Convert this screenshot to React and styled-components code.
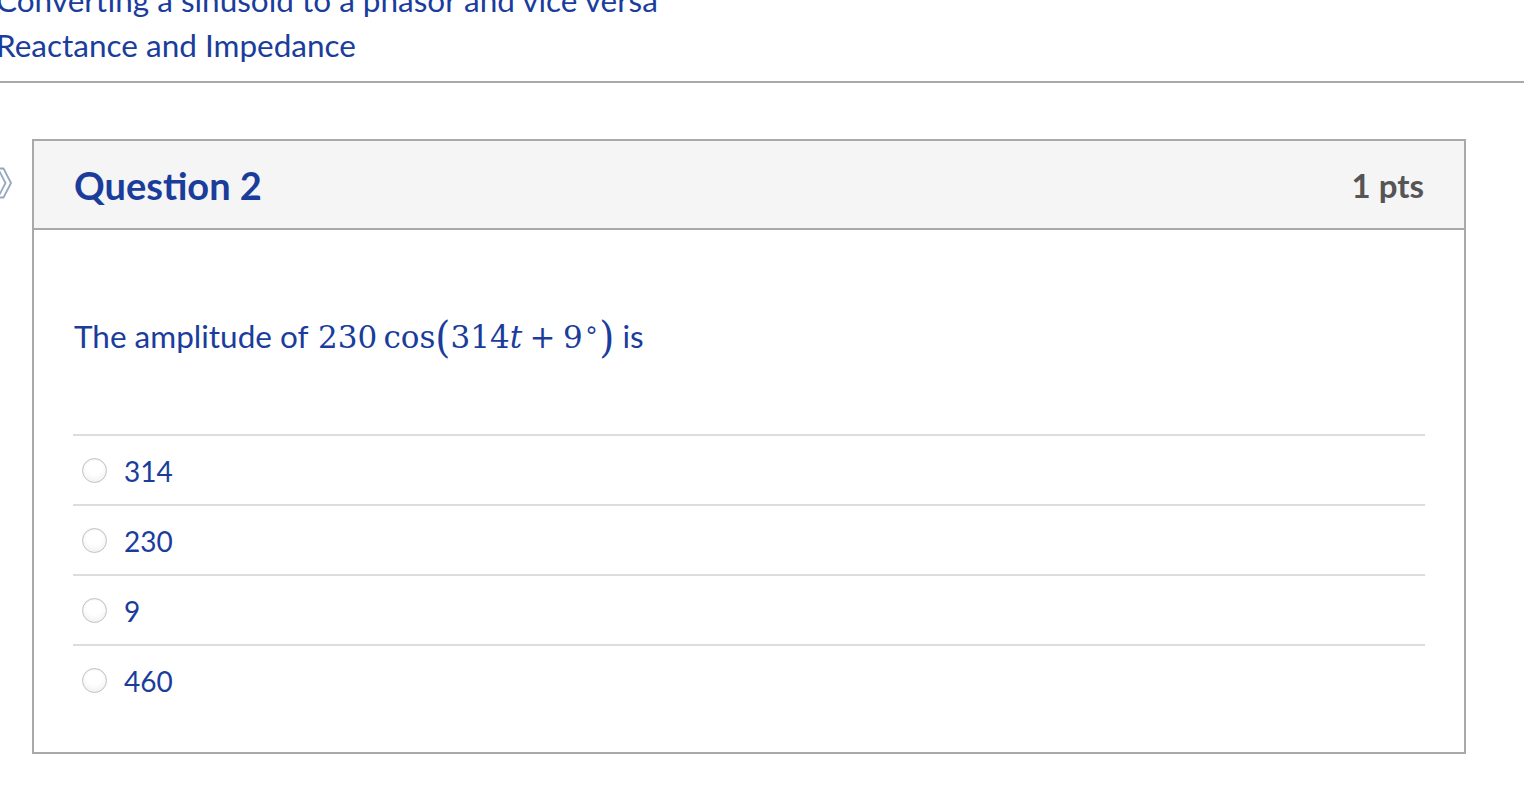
import React from "react";
import styled, { createGlobalStyle } from "styled-components";

const GlobalStyle = createGlobalStyle`
  html, body {
    margin: 0;
    padding: 0;
    background: #ffffff;
    overflow: hidden;
  }
  body {
    font-family: Lato, "Noto Sans", sans-serif;
    color: #1a3d9c;
  }
`;

const Page = styled.div`
  width: 1524px;
  height: 789px;
  overflow: hidden;
`;

const ModuleLinks = styled.ul`
  list-style: none;
  margin: -22px 0 0 -4px;
  padding: 0;
`;

const ModuleLink = styled.li`
  font-size: 31.5px;
  line-height: 45px;
  color: #1a3d9c;
  white-space: nowrap;
`;

const Rule = styled.hr`
  border: none;
  border-top: 2px solid #a9a9a9;
  margin: 13px 0 0;
`;

const QuestionWrap = styled.div`
  position: relative;
  margin: 56px 58px 0 32px;
`;

const Chevron = styled.svg`
  position: absolute;
  left: -35px;
  top: 28px;
`;

const QuestionBox = styled.div`
  border: 2px solid #a9a9a9;
  background: #ffffff;
`;

const QuestionHeader = styled.div`
  display: flex;
  align-items: center;
  justify-content: space-between;
  height: 87px;
  padding: 0 40px 0 40px;
  background: #f5f5f5;
  border-bottom: 2px solid #a9a9a9;
`;

const QuestionTitle = styled.h2`
  margin: 0;
  font-size: 38px;
  font-weight: 700;
  color: #1a3d9c;
`;

const Points = styled.span`
  font-size: 33px;
  font-weight: 700;
  color: #555555;
`;

const QuestionBody = styled.div`
  padding: 0 39px 38px;
`;

const QuestionText = styled.p`
  margin: 0;
  padding: 84px 0 75px 1px;
  font-size: 31.5px;
  line-height: 44px;
`;

const Math = styled.span`
  font-family: "DejaVu Serif", "Liberation Serif", serif;
  font-size: 31px;
  white-space: nowrap;
  margin-left: 2px;
`;

const Op = styled.span`
  margin-left: 0.2em;
`;

const Paren = styled.span`
  display: inline-block;
  font-size: 1.25em;
  transform: scaleY(1.12);
  vertical-align: -2px;
`;

const Italic = styled.i`
  font-style: italic;
`;

const Bin = styled.span`
  margin: 0 0.24em;
`;

const Degree = styled.sup`
  font-family: "DejaVu Sans", sans-serif;
  font-size: 0.8em;
  vertical-align: 0.42em;
  line-height: 0;
  margin-left: 1px;
`;

const AnswerList = styled.div`
  display: flex;
  flex-direction: column;
`;

const AnswerRow = styled.label`
  display: flex;
  align-items: center;
  height: 70px;
  border-top: 2px solid #dddddd;
  box-sizing: border-box;
  padding-top: 1px;
`;

const Radio = styled.span`
  width: 23px;
  height: 23px;
  margin-left: 9px;
  margin-right: 17px;
  border-radius: 50%;
  border: 1px solid #c2c2c2;
  background: radial-gradient(circle at 50% 35%, #ffffff 40%, #ebebeb 100%);
  box-shadow: inset 0 1px 1px rgba(0, 0, 0, 0.06);
  flex: none;
`;

const AnswerText = styled.span`
  font-size: 28px;
  color: #1a3d9c;
`;

const answers = ["314", "230", "9", "460"];

export default function App() {
  return (
    <Page>
      <GlobalStyle />
      <ModuleLinks>
        <ModuleLink>Converting a sinusoid to a phasor and vice versa</ModuleLink>
        <ModuleLink>Reactance and Impedance</ModuleLink>
      </ModuleLinks>
      <Rule />
      <QuestionWrap>
        <Chevron width="16" height="32" viewBox="0 0 16 32">
          <path
            d="M1 1.5 L6.5 1.5 L14 16 L6.5 30.5 L1 30.5 L8.5 16 Z"
            fill="#ffffff"
            stroke="#94a9bd"
            strokeWidth="1.8"
            strokeLinejoin="round"
          />
        </Chevron>
        <QuestionBox>
          <QuestionHeader>
            <QuestionTitle>Question 2</QuestionTitle>
            <Points>1 pts</Points>
          </QuestionHeader>
          <QuestionBody>
            <QuestionText>
              The amplitude of{" "}
              <Math>
                230<Op>cos</Op>
                <Paren>(</Paren>314<Italic>t</Italic>
                <Bin>+</Bin>9<Degree>∘</Degree>
                <Paren>)</Paren>
              </Math>{" "}
              is
            </QuestionText>
            <AnswerList>
              {answers.map((a) => (
                <AnswerRow key={a}>
                  <Radio />
                  <AnswerText>{a}</AnswerText>
                </AnswerRow>
              ))}
            </AnswerList>
          </QuestionBody>
        </QuestionBox>
      </QuestionWrap>
    </Page>
  );
}
